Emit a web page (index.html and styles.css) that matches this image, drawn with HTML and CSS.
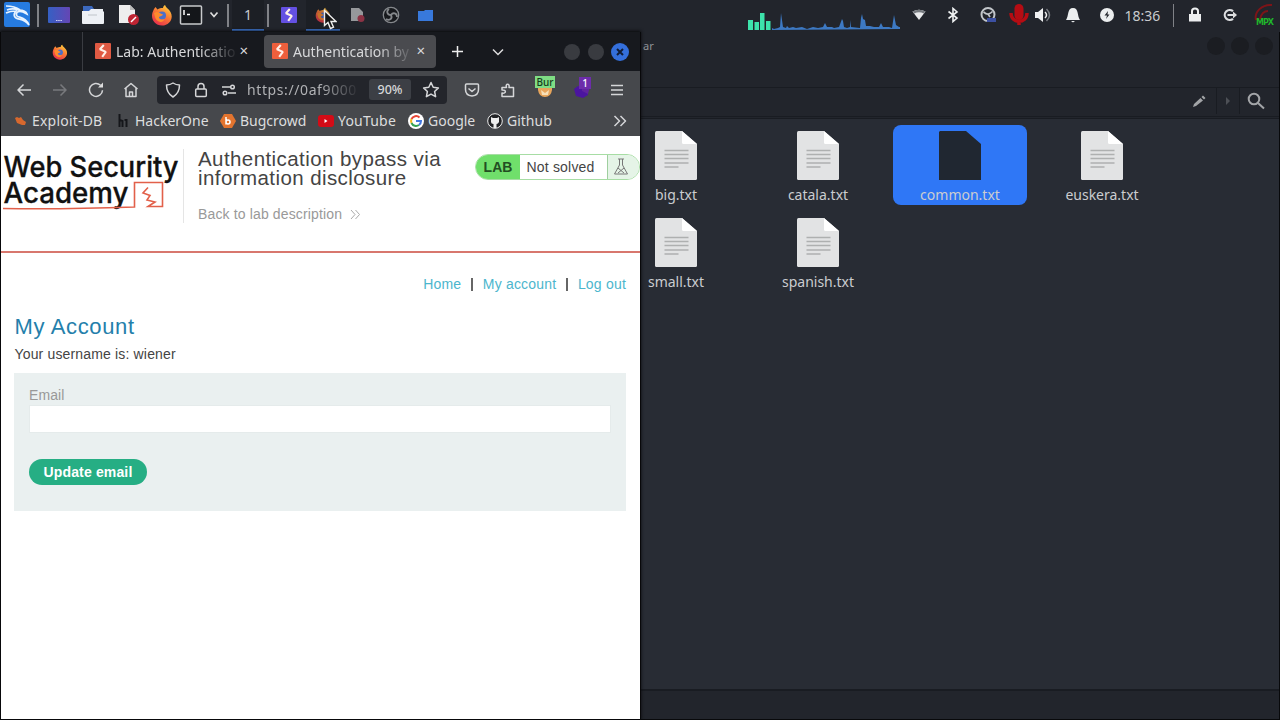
FILE: index.html
```html
<!DOCTYPE html>
<html lang="en">
<head>
<meta charset="utf-8">
<title>Desktop</title>
<link rel="stylesheet" href="styles.css">
</head>
<body>
<svg class="defs" width="0" height="0">
  <defs>
    <linearGradient id="fire" x1="0.8" y1="0" x2="0.2" y2="1"><stop offset="0" stop-color="#ffd53e"/><stop offset=".45" stop-color="#fb7a34"/><stop offset="1" stop-color="#e5294f"/></linearGradient>
    <linearGradient id="desk" x1="0" y1="0" x2="1" y2="0"><stop offset="0" stop-color="#3560c4"/><stop offset="1" stop-color="#6546b4"/></linearGradient>
    <symbol id="firefox" viewBox="0 0 22 22">
      <path d="M3 5l1.500-2 2 2.500C8 4 10 4 12 4c0-1.500 1-2.500 2-3 1 3 4 4 5.500 7C23 14 18.500 21.500 11 21.500S-.5 15 1.500 8.500z" fill="url(#fire)"/>
      <circle cx="11" cy="11.500" r="4" fill="#4c6fc9"/>
      <path d="M3 9c3-2 5-1 6.500.5L12 10.500c-1 2-4 1.500-4 3s3 3 5.500 1.500C12 20 5 18 4 13z" fill="#ff8b2c"/>
    </symbol>
    <symbol id="burp" viewBox="0 0 16 16">
      <path d="M8.800 2L5 6.200l5.800 2.700L7.200 13.800" fill="none" stroke="#fff0e8" stroke-width="2.100" stroke-linejoin="bevel"/>
    </symbol>
    <symbol id="file" viewBox="0 0 42 49">
      <path d="M1.500 0H27l15 13v34.500q0 1.500-1.500 1.500h-39Q0 49 0 47.500v-46Q0 0 1.500 0z" fill="#e2e3e4"/>
      <path d="M27 0l15 13H28.500Q27 13 27 11.500z" fill="#fff"/>
      <path d="M9.500 19.500h24M9.500 23.500h24M9.500 27.500h24M9.500 32h24M9.500 36h14" stroke="#aeb0b0" stroke-width="1.300"/>
    </symbol>
    <symbol id="file-selected" viewBox="0 0 42 49">
      <path d="M1 0H27l15 13v36H0V1z" fill="#202731"/>
    </symbol>
  </defs>
</svg>

<div class="panel">
  <span><svg width="28" height="26" viewBox="0 0 28 26"><rect x="1" width="26" height="25" rx="2" fill="#267be0"/><path d="M3 4c6 0 10 1 14 4M4 8c5-2 9-1 12 0 4 0 7 1 8 4l-4-2c-5-2-8 1-6 4 2 2 8 0 12 9-5-7-10-5-13-7-3-2-2-6 1-8M3 11c4-2 7-2 10-2" fill="none" stroke="#e8f3ff" stroke-width="1.700"/></svg></span>
  <span><i class="bar"></i></span>
  <span><svg width="22" height="17" viewBox="0 0 22 17"><rect width="22" height="16" rx="1" fill="url(#desk)"/><path d="M8 13.500h6" stroke="#cfd3f5" stroke-width="1.200" stroke-dasharray="1.500 .7"/></svg></span>
  <span><svg width="24" height="20" viewBox="0 0 24 20"><path d="M2 1h9l2 3h9v6H2z" fill="#3c69be"/><path d="M1 6h7l2-2h12v2l1 1v11q0 1-1 1H2q-1 0-1-1z" fill="#edf0f5"/><path d="M7 10h9" stroke="#bfc4ca"/></svg></span>
  <span><svg width="22" height="22" viewBox="0 0 22 22"><path d="M2 1h11l5 5v13H2z" fill="#eee"/><path d="M13 1l5 5h-5z" fill="#bbb"/><circle cx="16.500" cy="15.500" r="5.500" fill="#bf2433"/><path d="M14 18l5-5" stroke="#fff" stroke-width="1.500"/></svg></span>
  <span><svg width="22" height="22"><use href="#firefox"/></svg></span>
  <span><svg width="24" height="20" viewBox="0 0 24 20"><rect x="1.500" y="1" width="21" height="18" rx="1" fill="#14161a" stroke="#c8cacc" stroke-width="1.500"/><path d="M5 5v5M8 9.500h3" stroke="#fff" stroke-width="1.500"/></svg></span>
  <span><svg width="10" height="8" viewBox="0 0 10 8"><path d="M1.500 1.500L5 5.500l3.500-4" fill="none" stroke="#ddd" stroke-width="1.700"/></svg></span>
  <span><i class="bar"></i></span>
  <span class="open">1</span>
  <span><i class="bar"></i></span>
  <span><svg width="16" height="16"><rect width="16" height="16" rx="1" fill="#6450e2"/><use href="#burp"/></svg></span>
  <span class="open"><svg class="dim" width="16" height="16"><use href="#firefox"/></svg></span>
  <span><svg width="15" height="16" viewBox="0 0 15 16"><path d="M1 1h8l4 4v9H1z" fill="#96989b"/><circle cx="11" cy="11.500" r="3.500" fill="#8c3345"/></svg></span>
  <span><svg width="18" height="18" viewBox="0 0 18 18" fill="none" stroke="#85888c"><circle cx="9" cy="9" r="7.700" fill="#17191d" stroke-width="1.300"/><path d="M9 9C5 9 4 5 7 3M9 9c2-3 6-2 6 2M9 9c2 4-2 6-5 4" stroke-width="1.800"/></svg></span>
  <span><svg width="15" height="13" viewBox="0 0 15 13"><path d="M0 2h6l1-1h8v11H0z" fill="#3879dc"/></svg></span>
  <span></span>
  <span class="graph"><svg width="154" height="22" viewBox="0 0 154 22"><path d="M2 11h5v10H2zM8.500 13H13v8H8.500zM14 4h4.500v17H14zM20 12h4.500v9H20z" fill="#3de3ab"/><path d="M26 21v-2l2 1 4-1 2-1 1-14 2 14 3 1 1-2 2 2 4-1 3 1 6-1 5 2 6-2 5 1 5-1 2-4 2 4 5 0 2 1 5-1 3-8 1 2 1 6 3 1 3-1v-7l1 7 9 1 1-10 1-4 1 5 2 1 1 6 4 0 4 1 5 0 2-4 2 4 6 0 3 1 2-13 2 10 3 2h2l1-10 1 10v2z" fill="#3d79c3"/></svg></span>
  <span><svg width="16" height="12" viewBox="0 0 16 12"><path d="M1.500 2.500Q8-1 14.500 2.500L8 11z" fill="#e9eaec"/><path d="M1.500 2.500Q8-1 14.500 2.500l-1.700 2Q8 2 3.200 4.500z" fill="#777b80"/></svg></span>
  <span><svg width="12" height="16" viewBox="0 0 12 16"><path d="M1.500 4.500L10 11l-4 3.500v-13L10 5l-8.500 6.500" fill="none" stroke="#eef0f1" stroke-width="1.600"/></svg></span>
  <span><svg width="18" height="18" viewBox="0 0 18 18"><circle cx="9" cy="8.500" r="6.500" fill="none" stroke="#c2c6ca" stroke-width="2"/><path d="M4.500 6q3 2.500 5 2t4-2.500M9 8l2 3" fill="none" stroke="#c2c6ca" stroke-width="1.700"/><path d="M8 14h9" stroke="#3c50a2" stroke-width="4"/></svg></span>
  <span><svg width="20" height="24" viewBox="0 0 20 24"><rect x="5.500" y="1" width="9" height="16" rx="4.500" fill="#b50c13"/><path d="M2 10c0 11 16 11 16 0M10 17v5" fill="none" stroke="#b50c13" stroke-width="3.500"/></svg></span>
  <span><svg width="18" height="16" viewBox="0 0 18 16"><path d="M1 5h3l5-4v14l-5-4H1z" fill="#f0f1f2"/><path d="M11 5q3 3 0 6" fill="none" stroke="#eee" stroke-width="1.500"/><path d="M12.500 2q6 6 0 12" fill="none" stroke="#777b80" stroke-width="1.500"/></svg></span>
  <span><svg width="16" height="16" viewBox="0 0 16 16"><path d="M8 1c6 0 4 8 7 12H1C4 9 2 1 8 1zM6 14h4l-2 1.500z" fill="#eceeef"/></svg></span>
  <span><svg width="16" height="16" viewBox="0 0 16 16"><circle cx="8" cy="8" r="7" fill="#eceeef"/><path d="M9 4L5.500 8.500H8L7 12l3.500-4.500H8.500z" fill="#24272d"/></svg></span>
  <span>18:36</span>
  <span><i class="bar"></i></span>
  <span><svg width="14" height="16" viewBox="0 0 14 16"><path d="M1 7h12v7.500H1z" fill="#eceeef"/><path d="M4 7V4q0-2.500 3-2.500T10 4v3" fill="none" stroke="#eceeef" stroke-width="2"/></svg></span>
  <span><svg width="16" height="14" viewBox="0 0 16 14" fill="none" stroke="#dddfe1" stroke-width="2.200"><path d="M11 3.200A5 5 0 1 0 11 10.800M5.500 7H12"/><path d="M11 3.500L15 7l-4 3.500z" fill="#ddd" stroke="none"/></svg></span>
  <span><svg width="22" height="24" viewBox="0 0 22 24"><path d="M2 17C0 9 8 1 18 2M6 16q2-8 8-8" fill="none" stroke="#7d1418" stroke-width="2"/><text x="2" y="22" class="mpx" textLength="18">MPX</text></svg></span>
</div>

<main class="browser">
  <div class="tabs">
    <span class="pinned"><svg width="16" height="16"><use href="#firefox"/></svg></span>
    <div class="tab"><svg width="16" height="16"><rect width="16" height="16" rx="1" fill="#e05a43"/><use href="#burp"/></svg><b>Lab: Authenticatio</b><i>✕</i></div>
    <div class="tab active"><svg width="16" height="16"><rect width="16" height="16" rx="1" fill="#ee5f3c"/><use href="#burp"/></svg><b>Authentication by</b><i>✕</i></div>
    <span class="add"><svg width="13" height="13" viewBox="0 0 13 13"><path d="M6.500 1v11M1 6.500h11" stroke="#eee" stroke-width="1.500"/></svg></span>
    <span class="more"><svg width="12" height="8" viewBox="0 0 12 8"><path d="M1 1.500l5 5 5-5" fill="none" stroke="#ddd" stroke-width="1.500"/></svg></span>
    <div class="controls"><u></u><u></u><u class="close"><svg width="8" height="8" viewBox="0 0 8 8"><path d="M1 1l6 6M7 1L1 7" stroke="#111c35" stroke-width="2"/></svg></u></div>
  </div>
  <div class="nav">
    <span><svg width="16" height="14" viewBox="0 0 16 14" class="line"><path d="M15 7H2M7.500 1.500L2 7l5.500 5.500"/></svg></span>
    <span><svg width="16" height="14" viewBox="0 0 16 14" class="line faded"><path d="M1 7h13M8.500 1.500L14 7l-5.500 5.500"/></svg></span>
    <span><svg width="16" height="16" viewBox="0 0 16 16" class="line"><path d="M12.500 3.200a6.500 6.500 0 1 0 2 5"/><path d="M10 5.500h5v-5z" fill="#ddd" stroke="none"/></svg></span>
    <span><svg width="16" height="16" viewBox="0 0 16 16" class="line"><path d="M1.500 7L8 1.500 14.500 7M3 6v8.500h10V6M6.500 14v-4h3v4"/></svg></span>
    <div class="url">
      <span><svg width="16" height="16" viewBox="0 0 16 16" class="line"><path d="M8 1Q5 3 1.500 3q0 8 6.500 12 6.500-4 6.500-12Q11 3 8 1z"/></svg></span>
      <span><svg width="14" height="16" viewBox="0 0 14 16" class="line"><rect x="1.700" y="7" width="10.600" height="7.500" rx="1"/><path d="M4 7V4.500q0-3 3-3t3 3V7"/></svg></span>
      <span><svg width="16" height="12" viewBox="0 0 16 12" class="line"><path d="M1 3h8M7 9h8"/><circle cx="11.500" cy="3" r="1.800"/><circle cx="4" cy="9" r="1.800"/></svg></span>
      <b>https://0af9000</b>
      <em>90%</em>
      <span><svg width="18" height="18" viewBox="0 0 18 18" class="line"><path d="M9 1.500l2.200 4.800 5.200.6-3.800 3.600 1 5.200L9 13.100l-4.600 2.600 1-5.200L1.600 6.900l5.200-.6z"/></svg></span>
    </div>
    <span><svg width="16" height="16" viewBox="0 0 16 16" class="line"><path d="M2.500 2h11q1 0 1 1v4.500q0 6-6.500 6.500-6.500-.5-6.500-6.500V3q0-1 1-1zM4.500 6.500L8 9.500l3.500-3"/></svg></span>
    <span><svg width="16" height="16" viewBox="0 0 16 16" class="line"><path d="M2 5.500h4.500C5 1 10 1 9 5.500h4.500v9H2V11c4.500 1 4.500-3.500 0-3z"/></svg></span>
    <span class="foxy"><svg width="16" height="16" viewBox="0 0 16 16"><path d="M1 3l3 2h8l3-2v5q-1 7-7 7T1 8z" fill="#e7a55b"/><path d="M4 8l4 3 4-3-1 5H5z" fill="#f6dfb8"/></svg><b>Bur</b></span>
    <span class="cookie"><svg width="18" height="18" viewBox="0 0 18 18"><path d="M1 8l4-3 4 1 6 2v6l-5 3-7-2z" fill="#4b159f"/><path d="M9 3q6-3 8 2l-2 8-6-3z" fill="#60239e"/></svg><b>1</b></span>
    <span><svg width="14" height="12" viewBox="0 0 14 12" class="line"><path d="M1 1.500h12M1 6h12M1 10.500h12"/></svg></span>
  </div>
  <div class="bookmarks">
    <a class="b1"><svg width="14" height="12" viewBox="0 0 14 12"><path d="M1 3l2-1 2 1 2-1 2 3 3 2-1 3-3 0-5-2z" fill="#d7682e"/></svg>Exploit-DB</a>
    <a class="b2"><svg width="12" height="14" viewBox="0 0 12 14"><path d="M2.500 0v13M2.500 6l3 1v6M9.500 5v8M7.500 6h2" fill="none" stroke="#15161a" stroke-width="2"/></svg>HackerOne</a>
    <a class="b3"><svg width="16" height="16" viewBox="0 0 16 16"><path d="M4 1h8l4 7-4 7H4L0 8z" fill="#e2742f"/><path d="M6 4v7.500M6 9a2 2 0 1 0 4 0 2 2 0 1 0-4 0" fill="none" stroke="#fff" stroke-width="1.500"/></svg>Bugcrowd</a>
    <a class="b4"><svg width="16" height="14" viewBox="0 0 16 14"><rect y="1" width="16" height="12" rx="3" fill="#d40b16"/><path d="M6.500 5L9.500 7l-3 2z" fill="#fff"/></svg>YouTube</a>
    <a class="b5"><svg width="16" height="16" viewBox="0 0 16 16" fill="none" stroke-width="2"><circle cx="8" cy="8" r="8" fill="#fff"/><path d="M3.500 6A5 5 0 0 1 11.500 4.500" stroke="#e64434"/><path d="M3.500 6a5 5 0 0 0 0 4" stroke="#f3b51d"/><path d="M3.500 10a5 5 0 0 0 7.500 2" stroke="#34a253"/><path d="M11 12q2-1.500 2-4H8" stroke="#4378e0"/></svg>Google</a>
    <a class="b6"><svg width="16" height="16" viewBox="0 0 16 16"><circle cx="8" cy="8" r="7.300" fill="#222326" stroke="#eee"/><path d="M4 4l2 1h4l2-1v5q-1 2-2.500 2v4h-3v-4Q4 11 4 9z" fill="#eee"/></svg>Github</a>
    <span class="overflow"><svg width="14" height="12" viewBox="0 0 14 12" class="line"><path d="M1.500 1l5 5-5 5M7.500 1l5 5-5 5"/></svg></span>
  </div>

  <section class="page">
    <header>
      <svg class="logo" width="179" height="64" viewBox="0 0 179 64">
        <g class="logotext"><text x="2.500" y="28" textLength="175" lengthAdjust="spacingAndGlyphs">Web Security</text><text x="2.500" y="54" textLength="125" lengthAdjust="spacingAndGlyphs">Academy</text></g>
        <path d="M2 59.500Q60 60.500 133.500 58V33.500H161.500V57.500H147L154 53 146 51 149 46.500 142 44 147 38.500" fill="none" stroke="#e2604a" stroke-width="1.600"/>
      </svg>
      <div class="title"><h1>Authentication bypass via<br>information disclosure</h1><a>Back to lab description <svg width="11" height="11" viewBox="0 0 11 11"><path d="M1 1l4 4.500L1 10M5.500 1l4 4.500-4 4.500" fill="none" stroke="#aaa"/></svg></a></div>
      <div class="status"><b>LAB</b><span>Not solved</span><i><svg width="16" height="18" viewBox="0 0 16 18" fill="none" stroke="#777"><path d="M5 1h6M6.500 1v6L1.500 16h13l-5-9V1M5 10l6 5M11 10l-6 5"/></svg></i></div>
    </header>
    <nav class="links"><a>Home</a><s></s><a>My account</a><s></s><a>Log out</a></nav>
    <h2>My Account</h2>
    <p>Your username is: <span>wiener</span></p>
    <form><label>Email</label><input type="text"><button type="button">Update email</button></form>
  </section>
</main>

<aside class="manager">
  <div class="titlebar"><span>ar</span><div><u></u><u></u><u></u></div></div>
  <div class="location">
    <span class="edit"><svg width="14" height="14" viewBox="0 0 14 14"><path d="M1 13l1-3 6.500-6L11 6.500 4 12zM9.500 3L11 1.500 13.500 4 12 5.500z" fill="#a2a4a7"/></svg></span>
    <span class="next"><svg width="6" height="8"><path d="M1 0l4 4-4 4z" fill="#4d5056"/></svg></span>
    <span class="search"><svg width="18" height="18" viewBox="0 0 18 18" fill="none" stroke="#a3a5a8" stroke-width="2"><circle cx="7" cy="7" r="5.300"/><path d="M11 11l6 5.500"/></svg></span>
  </div>
  <div class="files">
    <div class="file"><svg width="42" height="49"><use href="#file"/></svg><span>big.txt</span></div>
    <div class="file"><svg width="42" height="49"><use href="#file"/></svg><span>catala.txt</span></div>
    <div class="file selected"><svg width="42" height="49"><use href="#file-selected"/></svg><span>common.txt</span></div>
    <div class="file"><svg width="42" height="49"><use href="#file"/></svg><span>euskera.txt</span></div>
    <div class="file"><svg width="42" height="49"><use href="#file"/></svg><span>small.txt</span></div>
    <div class="file"><svg width="42" height="49"><use href="#file"/></svg><span>spanish.txt</span></div>
  </div>
  <footer></footer>
</aside>

<svg class="pointer" width="14" height="21" viewBox="0 0 14 21"><path d="M1.500 1.500v15l3.500-3 2.500 6 3-1.300L8 12.500h5z" fill="#151515" stroke="#eee" stroke-width="1.400"/></svg>
</body>
</html>
```
FILE: styles.css
```css
* { box-sizing: border-box; }
body { margin: 0; width: 1280px; height: 720px; overflow: hidden; background: #08090b; font-family: "Noto Sans", sans-serif; }
svg { display: block; flex: none; }
b, i, em, u { font-style: normal; font-weight: 400; text-decoration: none; }
.defs { position: absolute; }

.panel {
  height: 32px; display: grid; background: #22252c; color: #c9cbce; font-size: 14px;
  grid-template-columns: 34px 8px 34px 34px 35px 33px 26px 20px 8px 32px 8px 34px 34px 34px 34px 34px 304px 155px 35px 34px 36px 26px 22px 38px 30px 41px 21px 22px 48px 22px;
}
.panel > span { height: 31px; padding-bottom: 1px; display: flex; align-items: center; justify-content: center; }
.bar { width: 1.500px; height: 23px; background: #808287; }
.panel .open { border-bottom: 2px solid #3b70c4; background: #1c1f25; padding: 0; }
.panel .graph { align-items: flex-end; justify-content: flex-start; padding-bottom: 0; }
.dim { opacity: .75; }
.mpx { font: bold 8px "DejaVu Sans", sans-serif; fill: #20b52b; }
.pointer { position: absolute; left: 323px; top: 9px; }

.browser { position: absolute; left: 1px; top: 32px; width: 639px; height: 687px; background: #fff; display: flex; flex-direction: column; box-shadow: 0 0 3px 1px #08090b; }
.tabs { height: 39px; background: #17191e; display: flex; align-items: center; color: #d7d8da; font-size: 14px; }
.pinned { width: 82px; height: 39px; padding-left: 51px; display: flex; align-items: center; border-right: 1px solid #3a3c42; }
.tab { width: 172px; height: 33px; margin-left: 5px; padding: 0 0 1px 7px; display: flex; align-items: center; border-radius: 4px; }
.tab.active { background: #4a4b4f; }
.tab + .tab { margin-left: 4px; padding-left: 8px; }
.tab b { width: 120px; margin-left: 5px; white-space: nowrap; -webkit-mask-image: linear-gradient(90deg, #000 70%, transparent 102%); mask-image: linear-gradient(90deg, #000 70%, transparent 102%); }
.tab i { margin-left: 3px; font: 11.500px "DejaVu Sans", sans-serif; }
.add { margin-left: 15px; }
.more { margin-left: 28px; }
.controls { margin-left: 60px; display: flex; gap: 8px; align-items: center; }
.controls u { width: 16px; height: 16px; border-radius: 50%; background: #393b40; }
.controls .close { width: 18px; height: 18px; margin-left: -1px; background: #346fdb; display: flex; align-items: center; justify-content: center; }

.nav { height: 37px; background: #46484c; display: grid; grid-template-columns: 40px 37px 35px 36px 8px 290px 6px 37px 36px 38px 36px 34px; }
.nav > span { display: flex; align-items: center; justify-content: center; }
.nav > span:first-child { padding-left: 5px; }
.line { fill: none; stroke: #d5d6d8; stroke-width: 1.500; stroke-linejoin: round; }
.faded { opacity: .35; }
.url { grid-column: 6; height: 28px; align-self: center; display: grid; grid-template-columns: 29px 29px 28px 118px 44px 38px; align-items: center; background: #23252b; border-radius: 4px; }
.url span { display: flex; justify-content: center; }
.url span:first-child { padding-left: 3px; }
.url b { margin-left: 4px; width: 112px; font-size: 14px; letter-spacing: .6px; color: #b1b2b5; -webkit-mask-image: linear-gradient(90deg, #000 65%, transparent 101%); mask-image: linear-gradient(90deg, #000 65%, transparent 101%); }
.url em { height: 21px; width: 42px; margin-left: 8px; background: #3c3f45; color: #d5d6d8; border-radius: 3px; font: 500 12.500px/21px "Noto Sans", sans-serif; text-align: center; }
.url span:last-child { padding-left: 14px; }
.url + span { grid-column: 8; }
.foxy, .cookie { position: relative; }
.foxy b, .cookie b { position: absolute; top: 5px; left: 9px; width: 20px; height: 12px; background: #7fdd84; color: #173a1a; font: 500 10px/12px "Noto Sans", sans-serif; text-align: center; }
.cookie b { left: 15px; width: 12px; top: 6px; background: #6d2daa; color: #fff; }

.bookmarks { height: 28px; background: #46484c; display: flex; align-items: center; padding-bottom: 3px; color: #dcddde; font-size: 14px; letter-spacing: .2px; }
.bookmarks a { display: flex; align-items: center; gap: 4px; }
.b1 { width: 104px; padding-left: 13px; }
.b2 { width: 115px; padding-left: 12px; }
.bookmarks .b2 { gap: 6px; letter-spacing: 0; }
.bookmarks .b3, .bookmarks .b5, .bookmarks .b6 { letter-spacing: 0; }
.b3 { width: 98px; }
.b4 { width: 90px; }
.b5 { width: 79px; }
.b6 { width: 126px; }

.page { flex: 1; font-family: "Liberation Sans", sans-serif; color: #444; }
.page header { height: 117px; border-bottom: 2px solid #d8776e; display: flex; align-items: flex-start; padding-top: 13px; }
.logo { margin-right: 3px; overflow: visible; }
.logotext { font: 500 28.500px Inter, sans-serif; fill: #111; stroke: #111; stroke-width: .3px; }
.title { width: 291px; height: 74px; border-left: 1px solid #e5e5e5; padding-left: 14px; }
.title h1 { margin: 0; font-size: 20.500px; font-weight: 400; line-height: 19px; color: #444; letter-spacing: .42px; white-space: nowrap; }
.title a { display: flex; align-items: center; gap: 8px; color: #999; font-size: 14px; letter-spacing: .14px; margin-top: 19px; }
.status { margin: 5px 0 0 1px; width: 165px; height: 26px; flex: none; border: 1px solid #a7dda4; border-radius: 13px; overflow: hidden; display: flex; font-size: 14px; line-height: 24px; }
.status b { width: 44px; background: #70df6b; text-align: center; font-weight: 700; color: #234e22; }
.status span { width: 88px; padding-right: 6px; text-align: center; border-right: 1px solid #9fcf9f; white-space: nowrap; letter-spacing: .2px; }
.status i { flex: 1; background: #e5f4e7; padding: 3px 0 0 5px; }
.links { display: flex; justify-content: flex-end; align-items: center; gap: 10px; margin: 22px 14px 0 0; height: 18px; font-size: 14px; letter-spacing: .2px; color: #4cb6cd; }
.links s { width: 1.500px; height: 13px; background: #666; }
h2 { margin: 21px 0 0 13.500px; color: #247fab; font-weight: 400; font-size: 22px; line-height: 26px; letter-spacing: .65px; }
.page p { margin: 5px 0 0 13.500px; font-size: 14px; line-height: 18px; letter-spacing: .16px; }
form { width: 612px; height: 138px; margin: 10px 0 0 13px; padding: 15px; background: #eaf0f0; }
form label { display: block; margin-top: -1px; font-size: 14px; line-height: 16px; letter-spacing: .1px; color: #999; }
form input { display: block; width: 582px; height: 28px; margin-top: 2px; border: 1px solid #e5ebeb; background: #fff; }
form button { display: block; width: 118px; height: 26px; margin-top: 26px; border: 0; border-radius: 13px; padding: 0 0 1px; background: #26ae84; color: #fff; font: bold 14px "Liberation Sans", sans-serif; letter-spacing: .15px; white-space: nowrap; }

.manager { position: absolute; left: 641px; top: 32px; width: 638px; height: 687px; background: #282c34; display: flex; flex-direction: column; z-index: -1; }
.titlebar { height: 55px; padding: 5px 6px 0 0; display: flex; justify-content: space-between; background: #22252c; color: #909297; font-size: 11px; }
.titlebar span { width: 20px; padding: 1px 0 0 2px; }
.titlebar div { display: flex; gap: 6px; }
.titlebar u { width: 18px; height: 18px; border-radius: 50%; background: #1b1d22; }
.location { height: 32px; padding-bottom: 2px; border-top: 1px solid #191c22; border-bottom: 3px double #191c22; background: #22252c; display: flex; justify-content: flex-end; }
.location span { display: flex; align-items: center; justify-content: center; }
.edit { width: 34px; }
.next { width: 24px; border: solid #191c22; border-width: 0 1px; }
.search { width: 39px; padding-right: 8px; }
.files { flex: 1; margin: 6px 0 0 -36px; display: grid; grid-template-columns: repeat(4, 142px); grid-template-rows: 87px 87px; font-size: 14px; color: #cbcdd0; }
.file { width: 134px; height: 80px; padding-top: 6px; justify-self: center; display: flex; flex-direction: column; align-items: center; gap: 5px; border-radius: 8px; }
.file span { line-height: 19px; }
.file.selected { background: #2f77f6; }
.manager footer { height: 30px; background: #22252c; border-top: 2px solid #191c22; }
```
